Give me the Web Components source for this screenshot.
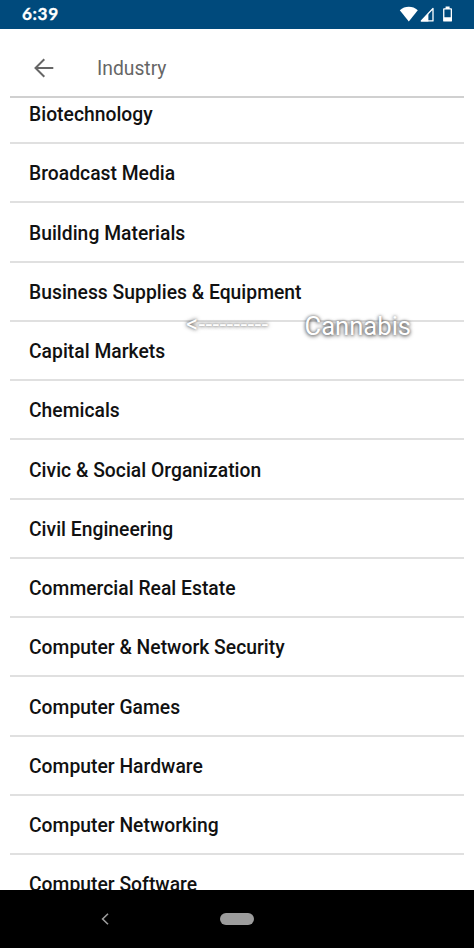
<!DOCTYPE html>
<html lang="en">
<head>
<meta charset="utf-8">
<title>Industry</title>
<style>
html, body { margin: 0; height: 100%; }
body { background: #fff; font-family: Roboto, "Liberation Sans", sans-serif; overflow: hidden; }
</style>
</head>
<body>
<industry-screen></industry-screen>
<script>
const define = (name, html) => customElements.define(name, class extends HTMLElement {
  constructor() {
    super();
    const t = document.createElement('template');
    t.innerHTML = html;
    this.attachShadow({ mode: 'open' }).append(t.content.cloneNode(true));
  }
});

define('status-bar', `
<style>
:host { display: flex; justify-content: space-between; align-items: center; box-sizing: border-box; height: 29px; flex: none; padding: 0 20px 1px 22px; background: #004a7c; color: #fff; }
time { font: 700 17.2px/28px Lato, Roboto, sans-serif; letter-spacing: .6px; -webkit-text-stroke: .3px #fff; }
svg { display: block; overflow: visible; }
</style>
<time>6:39</time>
<svg width="54" height="20" viewBox="0 0 54 20" fill="#fff">
  <path d="M-.2 6.200C2.400 3.800 5.500 2.700 8.800 2.700s6.400 1.100 9 3.500L8.800 17.500z"/>
  <path d="M21.300 16.900 33 4.500v12.400z" fill="none" stroke="#fff" stroke-width="1.300" stroke-linejoin="round"/>
  <path d="M20.800 17.400 28.400 9.500v7.900z"/>
  <path d="M45.600 2.500h4v1.700h1.500c.6 0 .9.300.9.900v11.600c0 .6-.3.900-.9.900h-7.100c-.6 0-.9-.3-.9-.9V5.100c0-.6.300-.9.900-.9h1.600zM44.400 5.600v7.600h6.300v-7.600z" fill-rule="evenodd"/>
</svg>`);

define('app-header', `
<style>
:host { display: flex; align-items: center; box-sizing: border-box; flex: none; height: 69px; margin: 0 10px; padding: 11px 24px 0; gap: 43px; border-bottom: 2px solid #d0d0d0; color: #666; font-size: 19.3px; letter-spacing: 0; }
svg { display: block; flex: none; }
span { padding-top: 1px; }
</style>
<svg width="20" height="20" viewBox="0 0 20 20" fill="none" stroke="#666" stroke-width="2"><path d="M19.300 10H1.800M10.300 1.200 1.500 10l8.800 8.800"/></svg>
<span><slot></slot></span>`);

define('industry-row', `
<style>
:host { display: flex; align-items: center; box-sizing: border-box; height: 59.25px; padding: 2px 19px 0; border-bottom: 2px solid #e0e0e0; color: #111; font-size: 19.3px; font-weight: 500; letter-spacing: .02px; white-space: nowrap; }
</style>
<span><slot></slot></span>`);

define('industry-list', `
<style>
:host { display: block; flex: 1; min-height: 0; overflow: hidden; padding: 0 10px; }
div { margin-top: -13.100px; }
</style>
<div><slot></slot></div>`);

define('navigation-bar', `
<style>
:host { display: grid; grid-template-columns: 101px 119px 34px; align-items: center; height: 58px; flex: none; background: #000; }
svg { display: block; grid-column: 2; }
i { height: 12px; border-radius: 6px; background: #9c9c9c; }
</style>
<svg width="8" height="12" viewBox="0 0 8 12" fill="none" stroke="#9c9c9c" stroke-width="1.600"><path d="M7 .7 1.600 6 7 11.300"/></svg>
<i></i>`);

define('floating-note', `
<style>
:host { position: absolute; left: 186px; top: 310px; display: flex; color: #fff; white-space: pre; line-height: 33px; text-shadow: 0 1px 4px rgba(0,0,0,.75), 0 0 3px rgba(0,0,0,.4); }
.arrow { width: 118.500px; font-size: 24px; line-height: 28px; letter-spacing: .35px; text-shadow: 0 0 4px rgba(0,0,0,.75), 0 0 2px rgba(0,0,0,.25); }
.label { font-size: 25.600px; }
</style>
<span class="arrow">&lt;----------</span><span class="label"><slot></slot></span>`);

define('industry-screen', `
<style>
:host { position: relative; display: flex; flex-direction: column; width: 474px; height: 948px; background: #fff; overflow: hidden; }
</style>
<status-bar></status-bar>
<app-header>Industry</app-header>
<industry-list>
${['Biotechnology', 'Broadcast Media', 'Building Materials', 'Business Supplies &amp; Equipment', 'Capital Markets', 'Chemicals', 'Civic &amp; Social Organization', 'Civil Engineering', 'Commercial Real Estate', 'Computer &amp; Network Security', 'Computer Games', 'Computer Hardware', 'Computer Networking', 'Computer Software'].map(n => `<industry-row>${n}</industry-row>`).join('')}
</industry-list>
<navigation-bar></navigation-bar>
<floating-note>Cannabis</floating-note>`);
</script>
</body>
</html>
